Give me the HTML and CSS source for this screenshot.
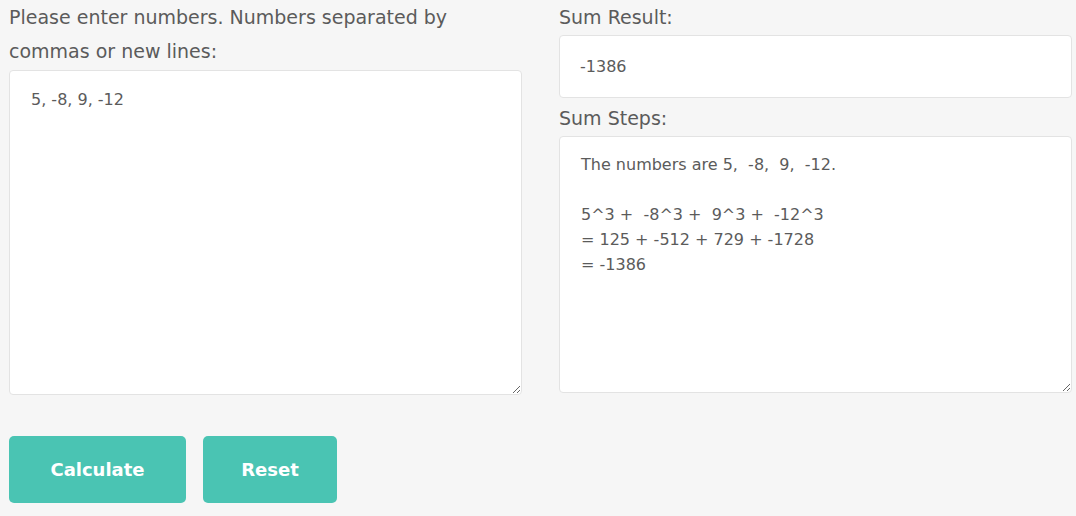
FILE: index.html
```html
<!DOCTYPE html>
<html lang="en">

<head>
    <meta charset="UTF-8">
    <meta name="viewport" content="width=device-width, initial-scale=1.0">
    <title>Sum of Cubes Calculator</title>
    <link rel="stylesheet" href="styles.css">
</head>

<body>
    <div class="calc">
        <div class="col">
            <label for="numbers" class="label">Please enter numbers. Numbers separated by commas or new lines:</label>
            <textarea id="numbers" class="box box-input">5, -8, 9, -12</textarea>
        </div>

        <div class="col">
            <label for="result" class="label">Sum Result:</label>
            <input type="text" id="result" class="box box-result" value="-1386">

            <label for="steps" class="label">Sum Steps:</label>
            <textarea id="steps" class="box box-steps">The numbers are 5,  -8,  9,  -12.

5^3 +  -8^3 +  9^3 +  -12^3
= 125 + -512 + 729 + -1728
= -1386</textarea>
        </div>
    </div>

    <div class="buttons">
        <button class="btn btn-calc">Calculate</button>
        <button class="btn btn-reset">Reset</button>
    </div>
</body>

</html>
```

FILE: styles.css
```css
body {
    margin: 0;
    background-color: #f6f6f6;
    font-family: "DejaVu Sans", sans-serif;
    color: #5b5b5b;
}

.calc {
    display: grid;
    grid-template-columns: 513px 513px;
    column-gap: 37px;
    padding-left: 9px;
}

.col {
    display: flex;
    flex-direction: column;
}

.label {
    font-size: 19px;
    line-height: 34px;
}

.box {
    box-sizing: border-box;
    width: 100%;
    margin: 0;
    border: 1px solid #e3e3e3;
    border-radius: 4px;
    background-color: #fff;
    font-family: "DejaVu Sans", sans-serif;
    font-size: 16px;
    color: #5b5b5b;
    outline: none;
}

.box-input {
    height: 325px;
    margin-top: 2px;
    padding: 16px 21px;
    line-height: 25px;
    resize: vertical;
}

.box-result {
    height: 63px;
    margin-top: 1px;
    margin-bottom: 3px;
    padding: 0 20px;
}

.box-steps {
    height: 257px;
    margin-top: 1px;
    padding: 15px 21px;
    line-height: 25px;
    resize: vertical;
}

.buttons {
    display: flex;
    gap: 17px;
    padding-left: 9px;
    margin-top: 41px;
}

.btn {
    height: 67px;
    border: none;
    border-radius: 5px;
    background-color: #4ac4b3;
    color: #fff;
    font-family: "DejaVu Sans", sans-serif;
    font-size: 18px;
    font-weight: 600;
    cursor: pointer;
}

.btn-calc {
    width: 177px;
}

.btn-reset {
    width: 134px;
}

.btn:hover {
    background-color: #3bb2a1;
}
```
